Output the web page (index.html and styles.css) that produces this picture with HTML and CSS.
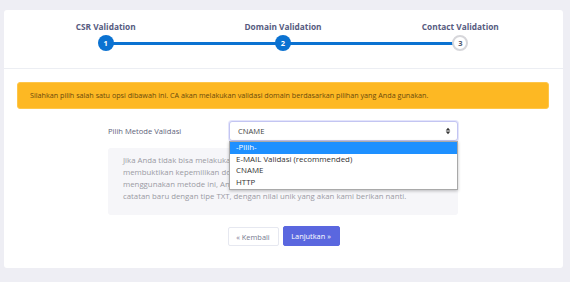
FILE: index.html
```html
<!DOCTYPE html>
<html lang="id">
<head>
<meta charset="utf-8">
<title>Validasi</title>
<link rel="stylesheet" href="styles.css">
</head>
<body>
<div class="card">
  <div class="steps">
    <div class="track"></div>
    <div class="step">
      <div class="step-label">CSR Validation</div>
      <div class="dot done">1</div>
    </div>
    <div class="step">
      <div class="step-label">Domain Validation</div>
      <div class="dot done">2</div>
    </div>
    <div class="step">
      <div class="step-label">Contact Validation</div>
      <div class="dot todo">3</div>
    </div>
  </div>
  <div class="body">
    <div class="alert">Silahkan pilih salah satu opsi dibawah ini. CA akan melakukan validasi domain berdasarkan pilihan yang Anda gunakan.</div>
    <div class="form">
      <div class="row">
        <label class="label">Pilih Metode Validasi</label>
        <div class="select">
          <span>CNAME</span>
          <svg class="caret" width="6" height="8" viewBox="0 0 6 8"><path d="M3 0.8 L5.3 3.4 H0.7 Z M3 7.2 L5.3 4.6 H0.7 Z" fill="#333"/></svg>
          <ul class="options">
            <li class="sel">-Pilih-</li>
            <li>E-MAIL Validasi (recommended)</li>
            <li>CNAME</li>
            <li>HTTP</li>
          </ul>
        </div>
      </div>
      <div class="info">Jika Anda tidak bisa melakukan validasi melalui email, Anda dapat<br>membuktikan kepemilikan domain dengan menambahkan data DNS. Jika<br>menggunakan metode ini, Anda perlu membuat dan menambahkan<br>catatan baru dengan tipe TXT, dengan nilai unik yang akan kami berikan nanti.</div>
    </div>
    <div class="actions">
      <button class="btn back">« Kembali</button>
      <button class="btn next">Lanjutkan »</button>
    </div>
  </div>
</div>
</body>
</html>
```
FILE: styles.css
```css
* { box-sizing: border-box; }
html, body { margin: 0; padding: 0; }
body {
  background: #eeeef4;
  font-family: "Open Sans", "Noto Sans", sans-serif;
  color: #555;
  width: 570px;
  height: 282px;
  overflow: hidden;
}
.card {
  margin: 10px 7px 0 4px;
  background: #fff;
  border-radius: 3px;
}
.steps {
  position: relative;
  display: grid;
  grid-template-columns: repeat(3, 1fr);
  padding: 12px 14px 17px 13px;
  border-bottom: 1px solid #eceef3;
}
.track {
  position: absolute;
  left: 102px;
  right: 102px;
  top: 32px;
  height: 3px;
  background: #0b72d1;
}
.step {
  display: flex;
  flex-direction: column;
  align-items: center;
  position: relative;
}
.step-label {
  font-size: 8.3px;
  font-weight: 700;
  color: #565b80;
  line-height: 10px;
  height: 10px;
}
.dot {
  margin-top: 3px;
  width: 16px;
  height: 16px;
  border-radius: 50%;
  font-size: 7.5px;
  font-weight: 700;
  line-height: 16px;
  text-align: center;
}
.dot.done { background: #0b72d1; color: #fff; }
.dot.todo { background: #fff; color: #555a70; border: 2px solid #d6d6da; line-height: 12px; }
.body {
  padding: 13px 14px 22px 13px;
}
.alert {
  height: 27px;
  background: #fdb823;
  border: 1px solid #fec64a;
  border-radius: 3px;
  padding: 0 12px;
  font-size: 7.2px;
  line-height: 25px;
  color: #6a4a0c;
  white-space: nowrap;
}
.form {
  margin: 12px 0 0 91px;
  width: 350px;
}
.row {
  display: flex;
  align-items: center;
  height: 20px;
}
.label {
  width: 121px;
  font-size: 7.6px;
  color: #60637a;
}
.select {
  position: relative;
  width: 229px;
  height: 20px;
  border: 1px solid #c3c5f2;
  border-radius: 3px;
  box-shadow: 0 0 0 1px #e4e5fb;
  display: flex;
  align-items: center;
  justify-content: space-between;
  padding: 0 6px 0 8px;
  font-size: 7.6px;
  color: #444;
  background: #fff;
}
.caret { display: block; }
.options {
  position: absolute;
  left: -1px;
  right: -1px;
  top: 19px;
  margin: 0;
  padding: 0 0 1px;
  list-style: none;
  background: #fff;
  border: 1px solid #a9a9a9;
  box-shadow: 0 1px 3px rgba(0,0,0,0.25);
  z-index: 2;
}
.options li {
  height: 11.6px;
  line-height: 11.6px;
  padding-left: 6px;
  font-size: 7.9px;
  color: #333;
}
.options li.sel { background: #1e90ff; color: #fff; }
.info {
  margin-top: 7px;
  height: 67px;
  background: #f6f6f9;
  border-radius: 3px;
  padding: 6px 10px 0 15px;
  font-size: 7.8px;
  line-height: 12px;
  color: #9a9aa3;
  white-space: nowrap;
  overflow: hidden;
}
.actions {
  display: flex;
  justify-content: center;
  gap: 4px;
  margin-top: 11px;
  padding-left: 1px;
}
.btn {
  font-family: inherit;
  font-size: 7.4px;
  height: 20px;
  border-radius: 2px;
  padding: 0;
  white-space: nowrap;
  text-align: center;
  cursor: pointer;
}
.btn.back {
  background: #fff;
  border: 1px solid #e6e8f0;
  color: #777a90;
  width: 51px;
  margin-top: 1px;
  height: 19px;
}
.btn.next {
  background: #5a67df;
  border: 1px solid #5a67df;
  color: #fff;
  width: 57px;
}
```
